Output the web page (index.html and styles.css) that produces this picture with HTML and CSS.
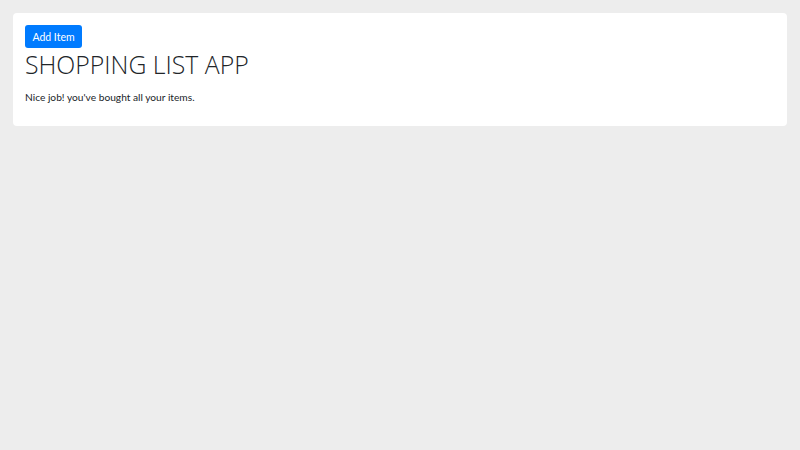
FILE: index.html
```html
<!DOCTYPE html>
<html>
<head>
<meta charset="utf-8">
<link rel="stylesheet" href="styles.css">
</head>
<body>
<div class="card">
  <button class="btn">Add Item</button>
  <h1 class="title">SHOPPING LIST APP</h1>
  <p class="msg">Nice job! you've bought all your items.</p>
</div>
</body>
</html>
```
FILE: styles.css
```css
html, body {
  margin: 0;
  padding: 0;
  background: #ededed;
  font-family: "Lato", "Open Sans", sans-serif;
  color: #212529;
}
body {
  padding: 13px;
}
.card {
  background: #fff;
  border-radius: 4px;
  padding: 12px 12px 21px;
  display: flex;
  flex-direction: column;
  align-items: flex-start;
}
.btn {
  background: #007bff;
  color: #fff;
  border: none;
  border-radius: 3px;
  height: 23px;
  width: 57px;
  padding: 0;
  font-family: "Lato", "Open Sans", sans-serif;
  font-size: 10.5px;
}
.title {
  margin: 0;
  font-family: "Open Sans", sans-serif;
  font-weight: 300;
  font-size: 24.8px;
  line-height: 33px;
}
.msg {
  margin: 8px 0 0;
  font-size: 10.2px;
  line-height: 16px;
}
```
